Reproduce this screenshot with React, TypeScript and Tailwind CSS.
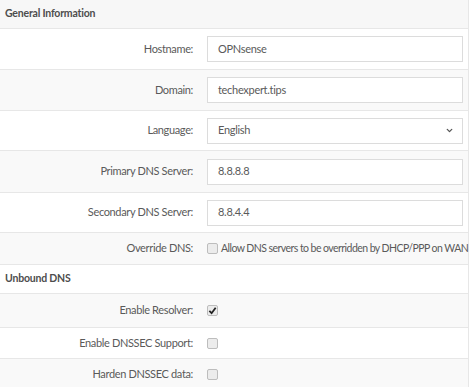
import { ChevronDown } from 'lucide-react';

// ── Pieces ─────────────────────────────────────────────────────────────────────

function SectionHead({ title, bg }: { title: string; bg: string }) {
  return (
    <div className={`h-[29px] flex items-center pl-[5px] border-b border-[#e7e7e7] ${bg}`}>
      <span className="text-[10.5px] font-bold tracking-[-0.2px] text-[#4d4d4d]">{title}</span>
    </div>
  );
}

function Row({
  label,
  striped,
  h,
  children,
}: {
  label: string;
  striped?: boolean;
  h: string;
  children: React.ReactNode;
}) {
  return (
    <div className={`flex items-center border-b border-[#e7e7e7] ${h} ${striped ? 'bg-[#f9f9f9]' : 'bg-white'}`}>
      <div className="w-[207px] shrink-0 pr-[14px] text-right text-[11px] tracking-[-0.35px] text-[#5a5a5a]">{label}</div>
      <div className="flex-1 min-w-0 pr-[5px] flex items-center">{children}</div>
    </div>
  );
}

function TextBox({ value }: { value: string }) {
  return (
    <div className="h-[26px] w-full border border-[#dcdcdc] bg-white flex items-center pl-[10px] text-[11px] tracking-[-0.3px] text-[#5a5a5a]">
      {value}
    </div>
  );
}

function Check({ on }: { on?: boolean }) {
  return (
    <span className="w-[11px] h-[11px] rounded-[2px] border border-[#bdbdbd] bg-[#ececec] flex items-center justify-center shrink-0">
      {on && (
        <svg width="9" height="9" viewBox="0 0 10 10">
          <path d="M1.5 5.5 L4 8 L8.5 2" fill="none" stroke="#222" strokeWidth="2" />
        </svg>
      )}
    </span>
  );
}

// ── Page ───────────────────────────────────────────────────────────────────────

export default function App() {
  return (
    <div className="w-[474px] h-[387px] bg-white overflow-hidden" style={{ fontFamily: 'Lato, "Open Sans", sans-serif' }}>
      <div className="w-[469px] border-r border-[#e7e7e7]">
        <SectionHead title="General Information" bg="bg-[#f7f7f7]" />

        <Row label="Hostname:" h="h-[41px]">
          <TextBox value="OPNsense" />
        </Row>
        <Row label="Domain:" h="h-[41px]" striped>
          <TextBox value="techexpert.tips" />
        </Row>
        <Row label="Language:" h="h-[40px]">
          <div className="h-[26px] w-full border border-[#dcdcdc] bg-white flex items-center justify-between pl-[10px] pr-[8px] text-[11px] tracking-[-0.3px] text-[#5a5a5a]">
            <span>English</span>
            <ChevronDown size={9} strokeWidth={3.5} className="text-[#555]" />
          </div>
        </Row>
        <Row label="Primary DNS Server:" h="h-[42px]" striped>
          <TextBox value="8.8.8.8" />
        </Row>
        <Row label="Secondary DNS Server:" h="h-[40px]">
          <TextBox value="8.8.4.4" />
        </Row>
        <Row label="Override DNS:" h="h-[32px]" striped>
          <div className="flex items-center gap-[3px] text-[10.5px] tracking-[-0.55px] text-[#5a5a5a] whitespace-nowrap">
            <Check />
            <span>Allow DNS servers to be overridden by DHCP/PPP on WAN</span>
          </div>
        </Row>

        <SectionHead title="Unbound DNS" bg="bg-white" />

        <Row label="Enable Resolver:" h="h-[34px]" striped>
          <Check on />
        </Row>
        <Row label="Enable DNSSEC Support:" h="h-[31px]">
          <Check />
        </Row>
        <Row label="Harden DNSSEC data:" h="h-[31px]" striped>
          <Check />
        </Row>
      </div>
    </div>
  );
}
